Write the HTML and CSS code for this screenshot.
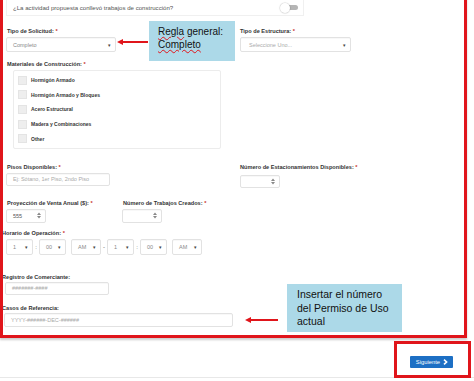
FILE: index.html
```html
<!DOCTYPE html>
<html lang="es">
<head>
    <meta charset="UTF-8">
    <meta name="viewport" content="width=device-width, initial-scale=1.0">
    <title>Permiso de Uso</title>
    <link rel="stylesheet" href="styles.css">
</head>
<body>

    <div class="page">
        <form class="form">
            <!-- pregunta con interruptor -->
            <div class="toggle-row">
                <span>¿La actividad propuesta conllevó trabajos de construcción?</span>
                <span class="switch"><span class="knob"></span></span>
            </div>

            <div class="row row-tipo">
                <div class="field col-left">
                    <label class="lbl">Tipo de Solicitud: <span class="req">*</span></label>
                    <div class="select sel-tipo"><span class="val">Completo</span><span class="caret">▾</span></div>
                </div>
                <div class="field">
                    <label class="lbl">Tipo de Estructura: <span class="req">*</span></label>
                    <div class="select sel-estr"><span class="ph">Seleccione Uno...</span><span class="caret">▾</span></div>
                </div>
            </div>

            <div class="row-mat">
                <label class="lbl">Materiales de Construcción: <span class="req">*</span></label>
                <div class="checklist">
                    <div class="check"><span class="box"></span>Hormigón Armado</div>
                    <div class="check"><span class="box"></span>Hormigón Armado y Bloques</div>
                    <div class="check"><span class="box"></span>Acero Estructural</div>
                    <div class="check"><span class="box"></span>Madera y Combinaciones</div>
                    <div class="check"><span class="box"></span>Other</div>
                </div>
            </div>

            <div class="row row-pisos">
                <div class="field col-left">
                    <label class="lbl">Pisos Disponibles: <span class="req">*</span></label>
                    <div class="input in-pisos"><span class="ph">Ej: Sótano, 1er Piso, 2ndo Piso</span></div>
                </div>
                <div class="field">
                    <label class="lbl">Número de Estacionamientos Disponibles: <span class="req">*</span></label>
                    <div class="input num in-est">
                        <svg class="spin" width="4" height="7" viewBox="0 0 4 7"><path d="M0 3 L2 0.5 L4 3 Z M0 4 L2 6.5 L4 4 Z" fill="#888"/></svg>
                    </div>
                </div>
            </div>

            <div class="row row-venta">
                <div class="field col-venta">
                    <label class="lbl">Proyección de Venta Anual ($): <span class="req">*</span></label>
                    <div class="input num"><span class="val dark">555</span>
                        <svg class="spin" width="4" height="7" viewBox="0 0 4 7"><path d="M0 3 L2 0.5 L4 3 Z M0 4 L2 6.5 L4 4 Z" fill="#888"/></svg>
                    </div>
                </div>
                <div class="field">
                    <label class="lbl">Número de Trabajos Creados: <span class="req">*</span></label>
                    <div class="input num">
                        <svg class="spin" width="4" height="7" viewBox="0 0 4 7"><path d="M0 3 L2 0.5 L4 3 Z M0 4 L2 6.5 L4 4 Z" fill="#888"/></svg>
                    </div>
                </div>
            </div>

            <div class="row-horario">
                <label class="lbl lbl-out">Horario de Operación: <span class="req">*</span></label>
                <div class="times">
                    <div class="select tsel"><span class="val">1</span><span class="caret">▾</span></div>
                    <span class="sep">:</span>
                    <div class="select tsel"><span class="val">00</span><span class="caret">▾</span></div>
                    <div class="select tsel ampm"><span class="val">AM</span><span class="caret">▾</span></div>
                    <span class="sep">-</span>
                    <div class="select tsel"><span class="val">1</span><span class="caret">▾</span></div>
                    <span class="sep">:</span>
                    <div class="select tsel"><span class="val">00</span><span class="caret">▾</span></div>
                    <div class="select tsel ampm"><span class="val">AM</span><span class="caret">▾</span></div>
                </div>
            </div>

            <div class="row-reg">
                <label class="lbl lbl-out">Registro de Comerciante:</label>
                <div class="input in-reg"><span class="ph">#######-####</span></div>
            </div>

            <div class="row-casos">
                <label class="lbl lbl-out">Casos de Referencia:</label>
                <div class="input in-casos"><span class="ph">YYYY-######-DEC-######</span></div>
            </div>
        </form>

        <div class="footer">
            <button type="button" class="btn-next">Siguiente
                <svg width="5" height="6" viewBox="0 0 5 6"><path d="M1 0.6 L3.6 3 L1 5.4" fill="none" stroke="#fff" stroke-width="1.6"/></svg>
            </button>
        </div>

        <!-- anotaciones sobre la captura -->
        <div class="frame frame-form"></div>
        <div class="frame frame-btn"></div>

        <div class="callout callout-regla">
            <span class="typo">Regla</span> general:<br>
            <span class="typo">Completo</span>
        </div>
        <svg class="arrow arrow-regla" width="31" height="8" viewBox="0 0 31 8">
            <path d="M5 4 H31" stroke="#e0151b" stroke-width="2"/>
            <path d="M0 4 L6 1 L6 7 Z" fill="#e0151b"/>
        </svg>

        <div class="callout callout-uso">
            Insertar el número<br>
            del Permiso de Uso<br>
            actual
        </div>
        <svg class="arrow arrow-uso" width="33" height="8" viewBox="0 0 33 8">
            <path d="M5 4 H33" stroke="#e0151b" stroke-width="2"/>
            <path d="M0 4 L6 1 L6 7 Z" fill="#e0151b"/>
        </svg>
    </div>

</body>
</html>
```

FILE: styles.css
```css
body {
    margin: 0;
    background: #fff;
    font-family: 'Liberation Sans', Arial, sans-serif;
    color: #333;
}

.page {
    position: relative;
    width: 474px;
    height: 381px;
    overflow: hidden;
}

.form {
    padding-left: 6px;
}

/* pregunta superior */
.toggle-row {
    display: flex;
    align-items: center;
    justify-content: space-between;
    width: 298px;
    height: 16px;
    box-sizing: border-box;
    padding: 0 5px 0 6px;
    border: 1px solid #f0f0f0;
    border-top: none;
    font-size: 6.1px;
    color: #555;
}

.switch {
    position: relative;
    width: 18px;
    height: 10px;
}

.switch::before {
    content: "";
    position: absolute;
    left: 5px;
    top: 2.5px;
    width: 13px;
    height: 5px;
    border-radius: 3px;
    background: #b5b5b5;
}

.knob {
    position: absolute;
    left: 0;
    top: 0;
    width: 10px;
    height: 10px;
    border-radius: 50%;
    background: #fff;
    box-shadow: 0 0 1px 0.5px rgba(0, 0, 0, 0.18);
}

/* etiquetas y campos */
.row {
    display: flex;
}

.row-tipo {
    margin-top: 11px;
}

.col-left {
    width: 233px;
}

.col-venta {
    width: 116px;
}

.lbl {
    display: block;
    height: 8px;
    line-height: 8px;
    margin-left: 1px;
    font-size: 5.6px;
    font-weight: bold;
    color: #333;
    white-space: nowrap;
}

.lbl-out {
    margin-left: -4px;
}

.req {
    color: #c9302c;
}

.select, .input {
    display: flex;
    align-items: center;
    box-sizing: border-box;
    border: 1px solid #e2e2e2;
    border-radius: 2px;
    background: #fff;
    box-shadow: inset 0 1px 1px rgba(0, 0, 0, 0.03);
    font-size: 5.5px;
    padding: 0 4px 0 6px;
}

.select {
    height: 15px;
    justify-content: space-between;
    margin-top: 2px;
}

.sel-tipo {
    width: 110px;
}

.sel-estr {
    width: 111px;
    margin-left: 1px;
    padding-left: 8px;
}

.val {
    color: #888;
}

.val.dark {
    color: #555;
}

.ph {
    color: #aaa;
}

.caret {
    font-size: 5px;
    color: #444;
}

/* materiales */
.row-mat {
    margin-top: 8px;
}

.checklist {
    width: 208px;
    margin: 2px 0 0 7px;
    box-sizing: border-box;
    padding: 2px 0 2px 4px;
    border: 1px solid #ececec;
    border-radius: 2px;
}

.check {
    display: flex;
    align-items: center;
    height: 14.6px;
    font-size: 5px;
    font-weight: bold;
    color: #333;
}

.box {
    width: 9px;
    height: 9px;
    margin-right: 4px;
    background: #eee;
    border: 1px solid #e4e4e4;
    box-sizing: border-box;
}

.row-pisos {
    margin-top: 14px;
}

.input {
    height: 13px;
    margin-top: 2px;
}

.in-pisos {
    width: 104px;
}

.in-est {
    width: 40px;
    margin-top: 4px;
    margin-left: 1px;
}

.num {
    width: 40px;
    justify-content: space-between;
    padding-right: 4px;
}

.row-venta {
    margin-top: 11px;
}

.row-venta .input {
    height: 14px;
}

.spin {
    margin-left: auto;
}

/* horario */
.row-horario {
    margin-top: 6px;
}

.times {
    display: flex;
    align-items: center;
    margin-top: 2px;
}

.tsel {
    width: 27px;
    height: 16px;
    margin-top: 0;
    padding: 0 4px 0 6px;
}

.ampm {
    width: 30px;
    margin-left: 5px;
}

.sep {
    width: 6px;
    text-align: center;
    font-size: 6px;
    color: #555;
}

.row-reg {
    margin-top: 18px;
}

.in-reg {
    width: 104px;
    margin: 1px 0 0 -1px;
}

.row-casos {
    margin-top: 9px;
}

.in-casos {
    width: 229px;
    height: 14px;
    margin: 1px 0 0 -2px;
}

/* pie con botón */
.footer {
    display: flex;
    justify-content: flex-end;
    padding: 29px 21px 9px 0;
    border-bottom: 1px solid #e8e8e8;
}

.btn-next {
    display: flex;
    align-items: center;
    gap: 3px;
    height: 12px;
    padding: 0 5px 0 6px;
    border: none;
    border-radius: 1px;
    background: #1d6fc4;
    color: #fff;
    font-family: 'Liberation Sans', Arial, sans-serif;
    font-size: 5.8px;
}

/* anotaciones */
.frame {
    position: absolute;
    box-sizing: border-box;
    border: 3px solid #e0151b;
}

.frame-form {
    left: 0;
    top: -10px;
    width: 467px;
    height: 348px;
    box-shadow: 0 2px 2px rgba(0, 0, 0, 0.2);
}

.frame-btn {
    left: 394px;
    top: 341px;
    width: 77px;
    height: 37px;
}

.callout {
    position: absolute;
    box-sizing: border-box;
    background: #acd9e8;
    color: #111;
    font-family: 'Liberation Sans', Arial, sans-serif;
}

.callout-regla {
    left: 149px;
    top: 21px;
    width: 86px;
    height: 40px;
    padding: 4px 0 0 9px;
    font-size: 10px;
    line-height: 13px;
}

.typo {
    text-decoration: underline wavy #e0151b;
    text-decoration-thickness: 1px;
    text-underline-offset: 1px;
}

.callout-uso {
    left: 287px;
    top: 284px;
    width: 115px;
    height: 48px;
    padding: 4px 0 0 10px;
    font-size: 10.5px;
    line-height: 13.5px;
}

.arrow {
    position: absolute;
}

.arrow-regla {
    left: 117px;
    top: 38px;
}

.arrow-uso {
    left: 245px;
    top: 316px;
}
```
